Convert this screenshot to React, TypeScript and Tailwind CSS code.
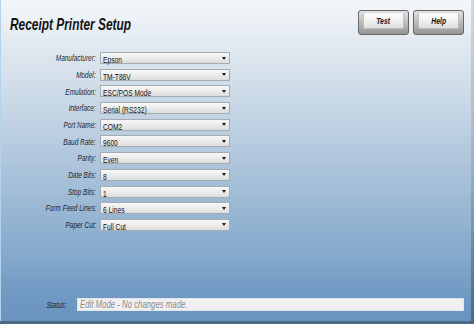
import React from "react";

const rows: [string, string][] = [
  ["Manufacturer:", "Epson"],
  ["Model:", "TM-T88V"],
  ["Emulation:", "ESC/POS Mode"],
  ["Interface:", "Serial (RS232)"],
  ["Port Name:", "COM2"],
  ["Baud Rate:", "9600"],
  ["Parity:", "Even"],
  ["Date Bits:", "8"],
  ["Stop Bits:", "1"],
  ["Form Feed Lines:", "6 Lines"],
  ["Paper Cut:", "Full Cut"],
];

function Btn({ label }: { label: string }) {
  return (
    <div className="w-[51px] h-[25px] rounded-[3px] border border-[#666666] bg-[linear-gradient(to_bottom,#e2e2e2,#b4b4b4_60%,#959595)] pt-[2px] px-[4px] pb-[5px] flex">
      <div className="flex-1 rounded-[2px] border border-[#c0c0c0] border-t-[#f4f4f4] bg-[linear-gradient(to_bottom,#fdfdfd,#ececec_60%,#dedede)] flex items-center justify-center">
        <span className="inline-block scale-x-[0.76] text-[9px] leading-none font-bold italic text-[#151515] whitespace-nowrap">
          {label}
        </span>
      </div>
    </div>
  );
}

function Select({ value }: { value: string }) {
  return (
    <div className="h-[12px] w-[130px] border border-[#a3abb3] bg-[linear-gradient(to_bottom,#f8f8f8,#ececec_50%,#dcdcdc)] flex items-center pl-[2px] pr-[2px]">
      <span className="flex-1 overflow-hidden">
        <span className="inline-block origin-left scale-x-[0.74] text-[9px] leading-none text-[#141414] whitespace-nowrap">
          {value}
        </span>
      </span>
      <svg width="4" height="3" viewBox="0 0 4 3" className="mr-[1px]">
        <path d="M0 0 L4 0 L2 3 Z" fill="#1a1a1a" />
      </svg>
    </div>
  );
}

export default function App() {
  return (
    <div className="w-[474px] h-[324px] bg-[linear-gradient(to_bottom,#d2d9e0,#9fb2c4_50%,#58738f_90%,#4a6987)] pr-[3px] pb-[3px] font-['Liberation_Sans',Arial,sans-serif]">
      <div className="h-full flex flex-col border-l border-l-[#b3d3ec] bg-[linear-gradient(to_bottom,#f4f7fa_0%,#e2eaf1_13%,#c9d8e6_32%,#a8c1d9_55%,#86abcd_78%,#7099c3_92%,#6a93bf_100%)]">
        <div className="flex items-start justify-between pl-[9px] pr-[7px] pt-[10px]">
          <div className="mt-[3px]">
            <span className="inline-block origin-left scale-x-[0.7] text-[17px] leading-none font-bold italic text-[#141414] whitespace-nowrap">
              Receipt Printer Setup
            </span>
          </div>
          <div className="flex gap-[4px]">
            <Btn label="Test" />
            <Btn label="Help" />
          </div>
        </div>

        <div className="mt-[15px] grid grid-cols-[95px_130px] gap-x-[4px] gap-y-[4.7px] items-center">
          {rows.map(([l, v]) => (
            <React.Fragment key={l}>
              <div className="h-[12px] flex items-center justify-end">
                <span className="inline-block origin-right scale-x-[0.68] text-[9.5px] leading-none italic text-[#20252c] whitespace-nowrap">
                  {l}
                </span>
              </div>
              <Select value={v} />
            </React.Fragment>
          ))}
        </div>

        <div className="flex-1" />

        <div className="flex items-center gap-[10px] pb-[10px]">
          <div className="w-[66px] flex justify-end">
            <span className="inline-block origin-right scale-x-[0.68] text-[9.5px] leading-none italic text-[#1a2430] whitespace-nowrap">
              Status:
            </span>
          </div>
          <div className="w-[387px] h-[13px] bg-[#f0f0f0] border border-[#dfe5ea] flex items-center pl-[2px]">
            <span className="inline-block origin-left scale-x-[0.78] text-[10px] leading-none italic text-[#8c8c8c] whitespace-nowrap">
              Edit Mode - No changes made.
            </span>
          </div>
        </div>
      </div>
    </div>
  );
}
